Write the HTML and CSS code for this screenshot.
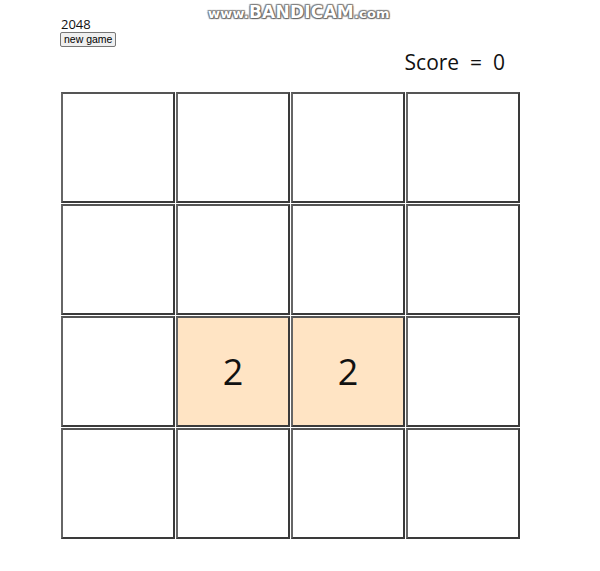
FILE: index.html
```html
<!DOCTYPE html>
<html lang="en">
<head>
    <meta charset="UTF-8">
    <title>2048</title>
    <link rel="stylesheet" href="styles.css">
</head>
<body>
    <div class="watermark"><span class="small">www.</span>BANDICAM<span class="small">.com</span></div>

    <div class="game">
        <div class="title">2048</div>
        <button class="new-game">new game</button>

        <div class="score-row">
            <span class="score">Score&nbsp; = &nbsp;<span id="score">0</span></span>
        </div>

        <div class="board" id="board">
            <div class="cell"></div>
            <div class="cell"></div>
            <div class="cell"></div>
            <div class="cell"></div>

            <div class="cell"></div>
            <div class="cell"></div>
            <div class="cell"></div>
            <div class="cell"></div>

            <div class="cell"></div>
            <div class="cell tile-2">2</div>
            <div class="cell tile-2">2</div>
            <div class="cell"></div>

            <div class="cell"></div>
            <div class="cell"></div>
            <div class="cell"></div>
            <div class="cell"></div>
        </div>
    </div>
</body>
</html>
```

FILE: styles.css
```css
* {
    margin: 0;
    padding: 0;
    box-sizing: border-box;
}

body {
    font-family: "Open Sans", "Noto Sans", sans-serif;
    background: white;
    color: #111;
}

.watermark {
    position: absolute;
    top: 2px;
    left: 208px;
    font-family: "DejaVu Sans", sans-serif;
    font-weight: bold;
    font-size: 17px;
    letter-spacing: 0.2px;
    color: white;
    text-shadow: 0 0 1px #555, 1px 1px 1px #666, -1px -1px 1px #888, 1px -1px 1px #888, -1px 1px 1px #888;
}

.watermark .small {
    font-size: 13px;
}

.game {
    padding: 17px 0 0 61px;
    width: 520px;
}

.title {
    font-size: 13px;
    line-height: 15px;
}

.new-game {
    display: block;
    font-family: "Liberation Sans", Arial, sans-serif;
    font-size: 10.5px;
    line-height: 13px;
    padding: 0 3px;
    margin-left: -1px;
    background: #efefef;
    border: 1px solid #767676;
    border-radius: 2px;
    color: #000;
}

.score-row {
    display: flex;
    justify-content: flex-end;
    padding-right: 15px;
    margin-top: 2px;
    margin-bottom: 17px;
}

.score {
    font-size: 21px;
    line-height: 26px;
}

.board {
    display: grid;
    grid-template-columns: repeat(4, 114px);
    grid-template-rows: repeat(4, 111px);
    gap: 1px;
}

.cell {
    border: 2px solid #444;
    border-color: #555 #3a3a3a #3a3a3a #666;
    display: flex;
    align-items: center;
    justify-content: center;
    font-size: 36px;
    color: #111;
}

.tile-2 {
    background: bisque;
}
```
